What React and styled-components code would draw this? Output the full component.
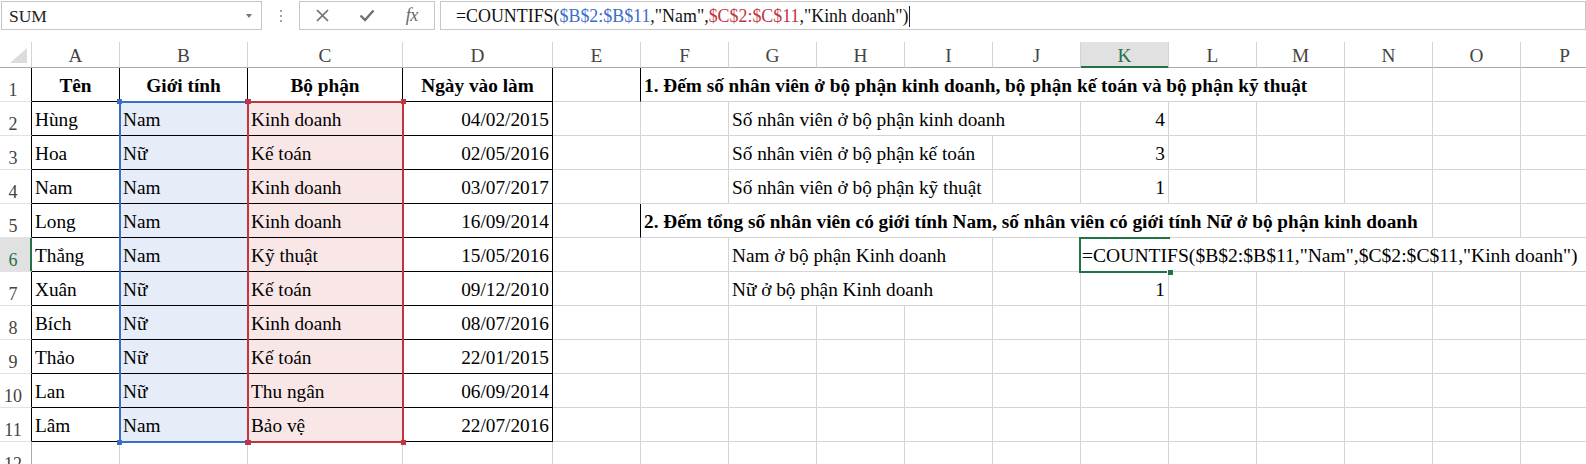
import React from 'react';
import styled, { createGlobalStyle } from 'styled-components';

const SERIF = `"Liberation Serif", "Times New Roman", "DejaVu Serif", serif`;
const GRID = '#d4d4d4';
const HEAD_LINE = '#ababab';
const GREEN = '#217346';
const BLUE = '#3b6ec6';
const RED = '#c2353f';
const FILLS = { blue: '#e7edf8', red: '#f9e7e8' };

const COLS = ['A', 'B', 'C', 'D', 'E', 'F', 'G', 'H', 'I', 'J', 'K', 'L', 'M', 'N', 'O', 'P'];
const WIDTHS = [88, 128, 155, 150, 88, 88, 88, 88, 88, 88, 88, 88, 88, 88, 88, 88];
const ROWS = [1, 2, 3, 4, 5, 6, 7, 8, 9, 10, 11, 12];

const table = [
  ['Tên', 'Giới tính', 'Bộ phận', 'Ngày vào làm'],
  ['Hùng', 'Nam', 'Kinh doanh', '04/02/2015'],
  ['Hoa', 'Nữ', 'Kế toán', '02/05/2016'],
  ['Nam', 'Nam', 'Kinh doanh', '03/07/2017'],
  ['Long', 'Nam', 'Kinh doanh', '16/09/2014'],
  ['Thắng', 'Nam', 'Kỹ thuật', '15/05/2016'],
  ['Xuân', 'Nữ', 'Kế toán', '09/12/2010'],
  ['Bích', 'Nữ', 'Kinh doanh', '08/07/2016'],
  ['Thảo', 'Nữ', 'Kế toán', '22/01/2015'],
  ['Lan', 'Nữ', 'Thu ngân', '06/09/2014'],
  ['Lâm', 'Nam', 'Bảo vệ', '22/07/2016'],
];

// nội dung bên phải, theo dòng (col: 0 = A)
const extras = {
  1: [{ col: 5, span: 8, bold: true, text: '1. Đếm số nhân viên ở bộ phận kinh doanh, bộ phận kế toán và bộ phận kỹ thuật' }],
  2: [{ col: 6, span: 4, text: 'Số nhân viên ở bộ phận kinh doanh' }, { col: 10, align: 'right', text: '4' }],
  3: [{ col: 6, span: 3, text: 'Số nhân viên ở bộ phận kế toán' }, { col: 10, align: 'right', text: '3' }],
  4: [{ col: 6, span: 3, text: 'Số nhân viên ở bộ phận kỹ thuật' }, { col: 10, align: 'right', text: '1' }],
  5: [{ col: 5, span: 9, bold: true, text: '2. Đếm tổng số nhân viên có giới tính Nam, số nhân viên có giới tính Nữ ở bộ phận kinh doanh' }],
  6: [{ col: 6, span: 3, text: 'Nam ở bộ phận Kinh doanh' }, { col: 10, span: 6, edit: true, text: '=COUNTIFS($B$2:$B$11,"Nam",$C$2:$C$11,"Kinh doanh")' }],
  7: [{ col: 6, span: 3, text: 'Nữ ở bộ phận Kinh doanh' }, { col: 10, align: 'right', text: '1' }],
};

const GlobalStyle = createGlobalStyle`
  html, body { margin: 0; padding: 0; background: #fff; }
  body { font-family: ${SERIF}; overflow: hidden; }
  * { box-sizing: border-box; }
`;

const Window = styled.div`
  width: 1586px;
  height: 464px;
  overflow: hidden;
  background: #fff;
  display: flex;
  flex-direction: column;
  font-family: ${SERIF};
`;

/* ---------- formula bar ---------- */
const FormulaBar = styled.div`
  display: flex;
  align-items: flex-start;
  height: 42px;
  padding-top: 1px;
  flex-shrink: 0;
`;

const NameBox = styled.div`
  margin-left: 1px;
  width: 261px;
  height: 29px;
  border: 1px solid #c6c6c6;
  display: flex;
  align-items: center;
  justify-content: space-between;
  padding: 1px 9px 0 7px;
  font-family: ${SERIF};
  font-size: 17.5px;
  color: #222;
`;

const DropArrow = styled.span`
  width: 0;
  height: 0;
  border-left: 3.5px solid transparent;
  border-right: 3.5px solid transparent;
  border-top: 4px solid #777;
`;

const Grip = styled.div`
  width: 37px;
  height: 29px;
  display: flex;
  flex-direction: column;
  align-items: center;
  justify-content: center;
  gap: 3px;
  & > span { width: 2px; height: 2px; background: #a3a3a3; }
`;

const FxBox = styled.div`
  width: 136px;
  height: 29px;
  border: 1px solid #c6c6c6;
  display: flex;
  align-items: center;
`;

const FxSlot = styled.div`
  width: 45px;
  display: flex;
  justify-content: center;
  align-items: center;
  color: #6e6e6e;
`;

const FxText = styled.span`
  font-style: italic;
  font-size: 18px;
  color: #666;
  letter-spacing: -0.5px;
`;

const FormulaInput = styled.div`
  margin-left: 5px;
  flex: 1;
  height: 29px;
  border: 1px solid #c6c6c6;
  display: flex;
  align-items: center;
  padding: 1px 0 0 15px;
  font-size: 17.9px;
  line-height: 20px;
  white-space: nowrap;
  color: #111;
`;

const Ref = styled.span`
  color: ${p => p.$color};
`;

const Caret = styled.span`
  display: inline-block;
  width: 1px;
  height: 21px;
  margin-left: 1px;
  background: #222;
`;

/* ---------- sheet ---------- */
const Sheet = styled.div`
  display: grid;
  grid-template-columns: 32px ${WIDTHS.map(w => `${w}px`).join(' ')};
  grid-template-rows: 26px repeat(12, 34px);
  width: max-content;
`;

const Corner = styled.div`
  grid-row: 1;
  grid-column: 1;
  border-right: 1px solid ${GRID};
  border-bottom: 1px solid ${HEAD_LINE};
  display: flex;
  align-items: flex-end;
  justify-content: flex-end;
  padding: 0 4px 4px 0;
  &::after {
    content: '';
    width: 0;
    height: 0;
    border-left: 17px solid transparent;
    border-bottom: 15px solid #dcdcdc;
  }
`;

const ColHead = styled.div`
  grid-row: 1;
  grid-column: ${p => p.$col + 2};
  display: flex;
  align-items: flex-end;
  justify-content: center;
  font-size: 19.3px;
  line-height: 22px;
  color: ${p => (p.$active ? GREEN : '#444')};
  background: ${p => (p.$active ? '#e1e1e1' : '#fff')};
  border-right: 1px solid ${GRID};
  border-bottom: 1px solid ${p => (p.$active ? GREEN : HEAD_LINE)};
  box-shadow: ${p => (p.$active ? `inset 0 -1px 0 ${GREEN}` : 'none')};
`;

const RowHead = styled.div`
  grid-row: ${p => p.$row + 1};
  grid-column: 1;
  display: flex;
  align-items: flex-end;
  justify-content: center;
  padding-right: 5px;
  font-size: 18px;
  line-height: 21px;
  color: ${p => (p.$active ? GREEN : '#444')};
  background: ${p => (p.$active ? '#e1e1e1' : '#fff')};
  border-right: 1px solid ${p => (p.$active ? GREEN : p.$edge)};
  border-bottom: 1px solid #e2e2e2;
  box-shadow: ${p => (p.$active ? `inset -1px 0 0 ${GREEN}` : 'none')};
`;

const Cell = styled.div`
  grid-row: ${p => p.$row + 1};
  grid-column: ${p => p.$col + 2} / span ${p => p.$span || 1};
  display: flex;
  align-items: flex-end;
  justify-content: ${p => (p.$align === 'right' ? 'flex-end' : p.$align === 'center' ? 'center' : 'flex-start')};
  padding: 0 3px 4px ${p => (p.$edit ? '1px' : '3px')};
  font-size: ${p => (p.$edit ? '19.6px' : '19.3px')};
  line-height: 22px;
  font-weight: ${p => (p.$bold ? 700 : 400)};
  color: #000;
  white-space: nowrap;
  min-width: 0;
  background: ${p => FILLS[p.$fill] || '#fff'};
  border-right: 1px solid ${p => p.$right || GRID};
  border-bottom: 1px solid ${p => p.$bottom || GRID};
`;

const RangeBox = styled.div`
  grid-column: ${p => p.$col + 2};
  grid-row: 3 / 13;
  margin: -1px;
  border: 2px solid ${p => p.$color};
  position: relative;
  pointer-events: none;
  z-index: 2;
`;

const Handle = styled.span`
  position: absolute;
  width: 5px;
  height: 5px;
  background: ${p => p.$color};
  ${p => (p.$top ? 'top: -4px;' : 'bottom: -4px;')}
  ${p => (p.$left ? 'left: -4px;' : 'right: -4px;')}
`;

const Selection = styled.div`
  grid-column: 12;
  grid-row: 7;
  margin: -1px -1px -1px -2px;
  border: 2px solid ${GREEN};
  border-right: none;
  position: relative;
  pointer-events: none;
  z-index: 3;
`;

const FillHandle = styled.span`
  position: absolute;
  right: -3px;
  bottom: -4px;
  width: 6px;
  height: 6px;
  background: ${GREEN};
  border: 1px solid #fff;
  border-right: none;
  border-bottom: none;
`;

function buildRow(r) {
  const specs = extras[r] || [];
  const cells = [];
  let c = 0;
  while (c < COLS.length) {
    const spec = specs.find(s => s.col === c);
    const span = (spec && spec.span) || 1;
    let text = spec ? spec.text : '';
    let align = spec ? spec.align : 'left';
    let bold = spec ? spec.bold : false;
    let right;
    let bottom;
    let fill;

    if (r <= 11 && c < 4) {
      text = table[r - 1][c];
      right = '#000';
      bottom = '#000';
      if (r === 1) {
        align = 'center';
        bold = true;
      } else {
        align = c === 3 ? 'right' : 'left';
        if (c === 1) fill = 'blue';
        if (c === 2) fill = 'red';
      }
    }
    if (c === 4 && (r === 1 || r === 5)) right = '#000';

    cells.push(
      <Cell key={c} $row={r} $col={c} $span={span} $align={align} $bold={bold}
        $right={right} $bottom={bottom} $fill={fill} $edit={spec && spec.edit}>
        {text}
      </Cell>
    );
    c += span;
  }
  return cells;
}

function Corners({ color }) {
  return (
    <>
      <Handle $color={color} $top $left />
      <Handle $color={color} $top />
      <Handle $color={color} $left />
      <Handle $color={color} />
    </>
  );
}

export default function App() {
  return (
    <>
      <GlobalStyle />
      <Window>
        <FormulaBar>
          <NameBox>
            <span>SUM</span>
            <DropArrow />
          </NameBox>
          <Grip><span /><span /><span /></Grip>
          <FxBox>
            <FxSlot>
              <svg width="13" height="13" viewBox="0 0 13 13">
                <path d="M1 1 L12 12 M12 1 L1 12" stroke="#6e6e6e" strokeWidth="1.7" fill="none" />
              </svg>
            </FxSlot>
            <FxSlot>
              <svg width="16" height="13" viewBox="0 0 16 13">
                <path d="M1.5 6.5 L6 11 L14.5 1.5" stroke="#6e6e6e" strokeWidth="2.3" fill="none" />
              </svg>
            </FxSlot>
            <FxSlot>
              <FxText>fx</FxText>
            </FxSlot>
          </FxBox>
          <FormulaInput>
            =COUNTIFS(<Ref $color={BLUE}>$B$2:$B$11</Ref>,"Nam",<Ref $color={RED}>$C$2:$C$11</Ref>,"Kinh doanh")
            <Caret />
          </FormulaInput>
        </FormulaBar>

        <Sheet>
          <Corner />
          {COLS.map((l, i) => (
            <ColHead key={l} $col={i} $active={l === 'K'}>{l}</ColHead>
          ))}
          {ROWS.map(r => (
            <React.Fragment key={r}>
              <RowHead $row={r} $active={r === 6} $edge={r <= 11 ? '#000' : HEAD_LINE}>{r}</RowHead>
              {buildRow(r)}
            </React.Fragment>
          ))}
          <RangeBox $col={1} $color={BLUE}><Corners color={BLUE} /></RangeBox>
          <RangeBox $col={2} $color={RED}><Corners color={RED} /></RangeBox>
          <Selection><FillHandle /></Selection>
        </Sheet>
      </Window>
    </>
  );
}
